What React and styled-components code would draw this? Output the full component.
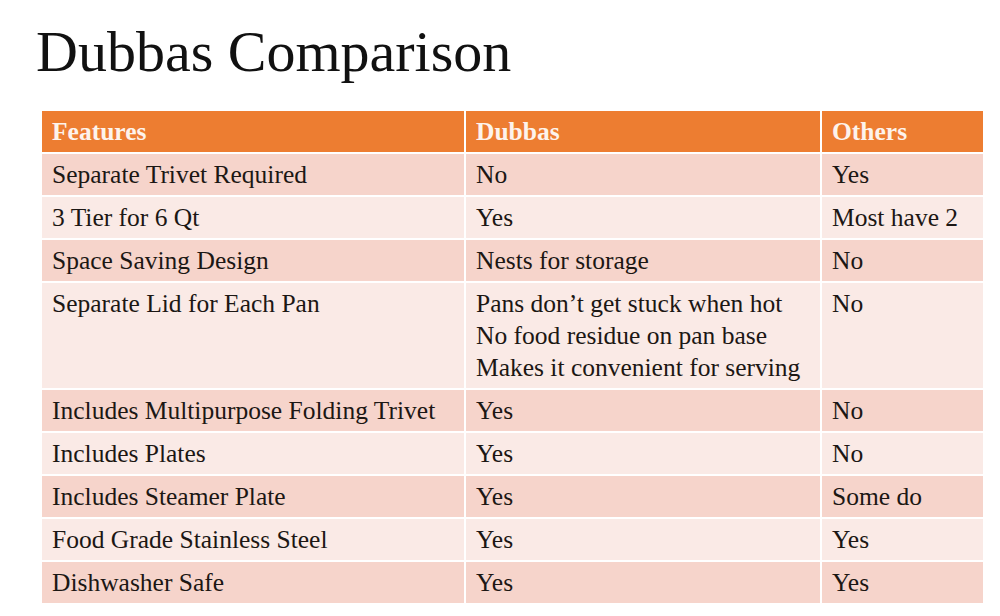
import React from "react";
import styled, { createGlobalStyle } from "styled-components";

const rows = [
  ["Separate Trivet Required", ["No"], "Yes"],
  ["3 Tier for 6 Qt", ["Yes"], "Most have 2"],
  ["Space Saving Design", ["Nests for storage"], "No"],
  [
    "Separate Lid for Each Pan",
    [
      "Pans don\u2019t get stuck when hot",
      "No food residue on pan base",
      "Makes it convenient for serving",
    ],
    "No",
  ],
  ["Includes Multipurpose Folding Trivet", ["Yes"], "No"],
  ["Includes Plates", ["Yes"], "No"],
  ["Includes Steamer Plate", ["Yes"], "Some do"],
  ["Food Grade Stainless Steel", ["Yes"], "Yes"],
  ["Dishwasher Safe", ["Yes"], "Yes"],
];

const App = () => {
  return (
    <>
      <GlobalStyle />
      <Slide>
        <Title>Dubbas Comparison</Title>
        <Table>
          <Head>Features</Head>
          <Head>Dubbas</Head>
          <Head>Others</Head>
          {rows.map(([feature, dubbas, others], i) => (
            <React.Fragment key={feature}>
              <Cell odd={i % 2 === 0}>{feature}</Cell>
              <Cell odd={i % 2 === 0}>
                {dubbas.map((line) => (
                  <div key={line}>{line}</div>
                ))}
              </Cell>
              <Cell odd={i % 2 === 0}>{others}</Cell>
            </React.Fragment>
          ))}
        </Table>
      </Slide>
    </>
  );
};

const GlobalStyle = createGlobalStyle`
  html, body {
    margin: 0;
    padding: 0;
    background: #ffffff;
  }
`;

const Slide = styled.div`
  width: 1000px;
  height: 616px;
  overflow: hidden;
  background: #ffffff;
  font-family: "Liberation Serif", "DejaVu Serif", serif;
  color: #1c1714;
`;

const Title = styled.h1`
  margin: 0;
  padding: 22px 0 0 36px;
  height: 87px;
  box-sizing: border-box;
  font-weight: 400;
  font-size: 58px;
  line-height: 60px;
  color: #111111;
`;

const Table = styled.div`
  margin-left: 42px;
  width: 941px;
  display: grid;
  grid-template-columns: 422px 354px 161px;
  gap: 2px;
  margin-top: 24px;
`;

const Head = styled.div`
  background: #ed7d31;
  color: #fdf3ec;
  font-weight: 700;
  font-size: 25.5px;
  line-height: 32px;
  padding: 5px 10px 4px 10px;
`;

const Cell = styled.div`
  background: ${(props) => (props.odd ? "#f6d4cb" : "#faeae6")};
  font-size: 25.5px;
  line-height: 32px;
  padding: 5px 10px 4px 10px;
  white-space: nowrap;
`;

export default App;
